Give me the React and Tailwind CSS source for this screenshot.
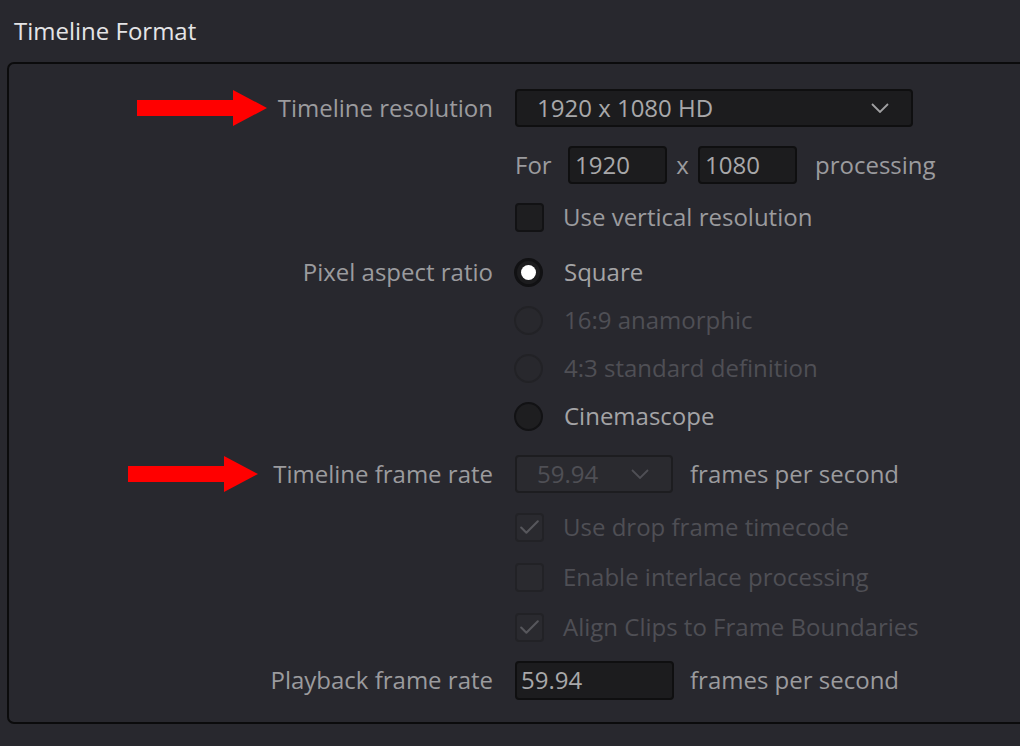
import { Check } from 'lucide-react'

function Arrow() {
  return (
    <svg width="130" height="36" viewBox="0 0 130 36" className="shrink-0">
      <polygon points="0,10 96,10 96,0 130,18 96,36 96,26 0,26" fill="#ff0000" />
    </svg>
  )
}

function Chevron({ color }) {
  return (
    <svg width="18" height="10" viewBox="0 0 18 10" className="shrink-0">
      <polyline points="1,1 9,9 17,1" fill="none" stroke={color} strokeWidth="1.8" />
    </svg>
  )
}

function Radio({ state }) {
  if (state === 'on') {
    return (
      <span className="flex h-[29px] w-[29px] items-center justify-center rounded-full border-[3px] border-[#111113] bg-[#1c1c1e]">
        <span className="h-[15px] w-[15px] rounded-full bg-white" />
      </span>
    )
  }
  if (state === 'disabled') {
    return <span className="h-[29px] w-[29px] rounded-full border-2 border-[#222226] bg-[#28282d]" />
  }
  return <span className="h-[29px] w-[29px] rounded-full border-2 border-[#121214] bg-[#1e1e20]" />
}

function Box({ checked, disabled }) {
  return (
    <span
      className={
        disabled
          ? 'flex h-[29px] w-[29px] items-center justify-center rounded-[4px] border-2 border-[#222226] bg-[#2a2a2f]'
          : 'flex h-[29px] w-[29px] items-center justify-center rounded-[4px] border-2 border-[#121214] bg-[#1e1e20]'
      }
    >
      {checked && <Check size={27} strokeWidth={2} color="#57575c" />}
    </span>
  )
}

function Label({ children, arrow, gap }) {
  return (
    <div className="flex w-[484px] shrink-0 items-center justify-end">
      {arrow && <div className={gap}><Arrow /></div>}
      <span>{children}</span>
    </div>
  )
}

export default function App() {
  return (
    <div
      className="h-[746px] w-[1020px] overflow-hidden bg-[#28282e] text-[24px] leading-none text-[#9b9b9e]"
      style={{ fontFamily: '"Open Sans", "Noto Sans", sans-serif' }}
    >
      <div className="flex h-[62px] items-center pb-[1px] pl-[14px] text-[#e4e4e6]">Timeline Format</div>

      <div className="ml-[7px] w-[1040px] rounded-[7px] border-2 border-[#0b0b0c] pb-[23px] pt-[25px]">
        <div className="flex h-[38px] items-center gap-[22px]">
          <Label arrow gap="mr-[11px]">Timeline resolution</Label>
          <div className="flex h-[38px] w-[398px] items-center justify-between rounded-[4px] border-2 border-[#0f0f10] bg-[#1c1c1e] pl-[20px] pr-[22px] text-[#a8a8aa]">
            <span>1920 x 1080 HD</span>
            <Chevron color="#a0a0a2" />
          </div>
        </div>

        <div className="mt-[19px] flex h-[38px] items-center gap-[22px]">
          <div className="w-[484px] shrink-0" />
          <div className="flex items-center">
            <span className="w-[53px]">For</span>
            <div className="flex h-[38px] w-[99px] items-center rounded-[4px] border-2 border-[#0f0f10] bg-[#1c1c1e] pl-[5px] text-[#a8a8aa]">1920</div>
            <span className="w-[31px] text-center">x</span>
            <div className="flex h-[38px] w-[99px] items-center rounded-[4px] border-2 border-[#0f0f10] bg-[#1c1c1e] pl-[5px] text-[#a8a8aa]">1080</div>
            <span className="ml-[18px]">processing</span>
          </div>
        </div>

        <div className="mt-[18px] flex h-[30px] items-center gap-[22px]">
          <div className="w-[484px] shrink-0" />
          <div className="flex items-center gap-[19px]">
            <Box />
            <span>Use vertical resolution</span>
          </div>
        </div>

        <div className="mt-[25px] flex h-[30px] items-center gap-[21px]">
          <Label>Pixel aspect ratio</Label>
          <div className="flex items-center gap-[21px]">
            <Radio state="on" />
            <span className="text-[#a4a4a6]">Square</span>
          </div>
        </div>

        <div className="mt-[18px] flex h-[30px] items-center gap-[21px]">
          <div className="w-[484px] shrink-0" />
          <div className="flex items-center gap-[21px] text-[#4f4f55]">
            <Radio state="disabled" />
            <span>16:9 anamorphic</span>
          </div>
        </div>

        <div className="mt-[18px] flex h-[30px] items-center gap-[21px]">
          <div className="w-[484px] shrink-0" />
          <div className="flex items-center gap-[21px] text-[#4f4f55]">
            <Radio state="disabled" />
            <span>4:3 standard definition</span>
          </div>
        </div>

        <div className="mt-[18px] flex h-[30px] items-center gap-[21px]">
          <div className="w-[484px] shrink-0" />
          <div className="flex items-center gap-[21px]">
            <Radio state="off" />
            <span className="text-[#a4a4a6]">Cinemascope</span>
          </div>
        </div>

        <div className="mt-[24px] flex h-[38px] items-center gap-[22px]">
          <Label arrow gap="mr-[15px]">Timeline frame rate</Label>
          <div className="flex h-[38px] w-[158px] items-center justify-between rounded-[4px] border-2 border-[#1d1d20] bg-[#2a2a2f] pl-[20px] pr-[22px] text-[#4f4f55]">
            <span>59.94</span>
            <Chevron color="#4f4f55" />
          </div>
          <span className="-ml-[5px]">frames per second</span>
        </div>

        <div className="mt-[19px] flex h-[30px] items-center gap-[22px]">
          <div className="w-[484px] shrink-0" />
          <div className="flex items-center gap-[19px] text-[#4f4f55]">
            <Box checked disabled />
            <span>Use drop frame timecode</span>
          </div>
        </div>

        <div className="mt-[20px] flex h-[30px] items-center gap-[22px]">
          <div className="w-[484px] shrink-0" />
          <div className="flex items-center gap-[19px] text-[#4f4f55]">
            <Box disabled />
            <span>Enable interlace processing</span>
          </div>
        </div>

        <div className="mt-[20px] flex h-[30px] items-center gap-[22px]">
          <div className="w-[484px] shrink-0" />
          <div className="flex items-center gap-[19px] text-[#4f4f55]">
            <Box checked disabled />
            <span>Align Clips to Frame Boundaries</span>
          </div>
        </div>

        <div className="mt-[19px] flex h-[38px] items-center gap-[22px]">
          <Label>Playback frame rate</Label>
          <div className="flex h-[39px] w-[159px] items-center rounded-[4px] border-2 border-[#0f0f10] bg-[#1c1c1e] pl-[4px] text-[#a8a8aa]">59.94</div>
          <span className="-ml-[6px]">frames per second</span>
        </div>
      </div>
    </div>
  )
}
